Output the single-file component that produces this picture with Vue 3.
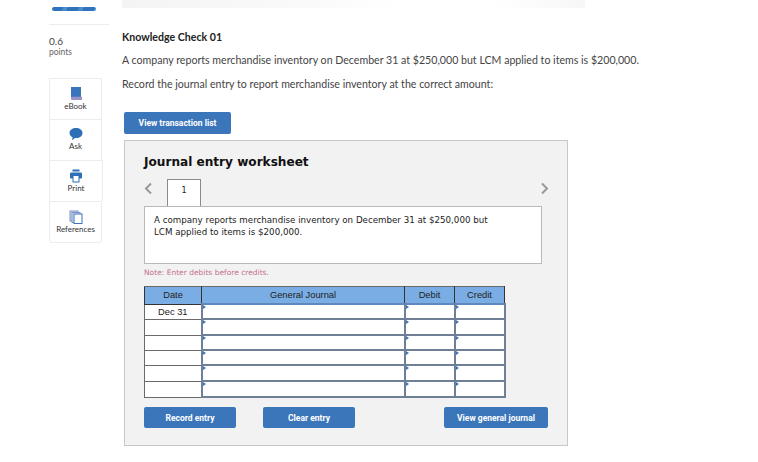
<script setup>
const rows = [
  { date: 'Dec 31' }, { date: '' }, { date: '' }, { date: '' }, { date: '' }, { date: '' }
]
</script>

<template>
  <div class="page">
    <aside class="side">
      <div class="progress"></div>
      <div class="rule"></div>
      <div class="score">0.6</div>
      <div class="pts">points</div>
      <div class="tools">
        <div class="tool">
          <svg width="14" height="14" viewBox="0 0 14 14"><path d="M2 0h10v10H3C2.400 10 2 10.400 2 11z" fill="#3a75bb"/><path d="M2 11c0-.8.5-1.200 1.200-1.200H13V13H3c-.6 0-1-.6-1-2z" fill="#9a92c8"/></svg>
          <span>eBook</span>
        </div>
        <div class="tool ask">
          <svg width="14" height="14" viewBox="0 0 14 14"><path d="M7 1c3.500 0 6.500 2 6.500 5S10.500 11 7.500 11c-.6 0-1 0-1.500-.1L3 13.200l.6-3C1.700 9.300.5 7.900.5 6 .5 3 3.500 1 7 1z" fill="#2f6fb5"/></svg>
          <span>Ask</span>
        </div>
        <div class="tool print">
          <svg width="14" height="14" viewBox="0 0 14 14"><rect x="3.500" y="0.500" width="7" height="2" fill="#2f6fb5"/><rect x="1" y="3.500" width="12" height="6" rx="1" fill="#2f6fb5"/><rect x="4" y="6.500" width="6" height="6.500" fill="#fff" stroke="#2f6fb5"/></svg>
          <span>Print</span>
        </div>
        <div class="tool last">
          <svg width="14" height="14" viewBox="0 0 14 14"><rect x="1" y="1" width="8" height="10" fill="#cfd8ee" stroke="#7d93c7"/><rect x="3" y="2.500" width="8" height="10" fill="#dfe6f5" stroke="#7d93c7"/><rect x="5" y="4" width="8" height="9.500" fill="#fff" stroke="#3a75bb"/></svg>
          <span>References</span>
        </div>
      </div>
    </aside>

    <main class="main">
      <div class="band"></div>
      <h1 class="heading">Knowledge Check 01</h1>
      <p class="para first">A company reports merchandise inventory on December 31 at $250,000 but LCM applied to items is $200,000.</p>
      <p class="para">Record the journal entry to report merchandise inventory at the correct amount:</p>
      <button class="btn list-btn">View transaction list</button>

      <section class="panel">
        <h2 class="title">Journal entry worksheet</h2>
        <div class="tabs">
          <svg class="chev" width="9" height="13" viewBox="0 0 9 13"><path d="M7 1.500 2 6.500l5 5" fill="none" stroke="#999" stroke-width="2"/></svg>
          <div class="tab">1</div>
          <svg class="chev right" width="9" height="13" viewBox="0 0 9 13"><path d="M2 1.500l5 5-5 5" fill="none" stroke="#999" stroke-width="2"/></svg>
        </div>
        <div class="desc">A company reports merchandise inventory on December 31 at $250,000 but<br>LCM applied to items is $200,000.</div>
        <div class="note">Note: Enter debits before credits.</div>

        <table class="grid">
          <colgroup>
            <col class="c-date"><col class="c-gj"><col class="c-dr"><col class="c-cr">
          </colgroup>
          <thead>
            <tr><th>Date</th><th>General Journal</th><th>Debit</th><th>Credit</th></tr>
          </thead>
          <tbody>
            <tr v-for="(r, i) in rows" :key="i">
              <td class="date">{{ r.date }}</td>
              <td class="cell"></td>
              <td class="cell"></td>
              <td class="cell"></td>
            </tr>
          </tbody>
        </table>

        <div class="actions">
          <button class="btn act">Record entry</button>
          <button class="btn act clear">Clear entry</button>
          <button class="btn act view">View general journal</button>
        </div>
      </section>
    </main>
  </div>
</template>

<style>
html, body { margin: 0; background: #fff; }
</style>

<style scoped>
.page {
  width: 758px;
  height: 462px;
  overflow: hidden;
  display: flex;
  gap: 13px;
  padding-left: 49px;
  box-sizing: border-box;
  font-family: Lato, "Open Sans", sans-serif;
  color: #333;
}
.side { width: 60px; flex: none; }
.progress {
  width: 44px;
  height: 4px;
  margin: 7px 0 0 3px;
  border-radius: 2px;
  background: repeating-linear-gradient(120deg, #2f74bb 0 10px, #4a8ccc 10px 14px);
}
.rule { height: 1px; background: #ececec; margin-top: 13px; }
.score { margin-top: 10px; font-size: 10px; line-height: 12px; color: #444; }
.pts { font-size: 8.500px; line-height: 11px; color: #666; }
.tools { margin-top: 20px; width: 53px; }
.tool {
  height: 41px;
  box-sizing: border-box;
  border: 1px solid #ececec;
  border-bottom: 0;
  display: flex;
  flex-direction: column;
  align-items: center;
  padding-top: 8px;
  font-size: 8px;
  line-height: 9px;
  color: #333;
}
.tool span { margin-top: 1px; }
.tool.ask { padding-top: 7px; }
.tool.print { width: 54px; }
.tool.last { border-bottom: 1px solid #ececec; border-radius: 0 0 3px 3px; height: 42px; }

.main { width: 636px; flex: none; }
.band {
  width: 463px;
  height: 8px;
  background: linear-gradient(90deg, #f4f4f4, #fafafa 40%, #fff 60%, #fff 80%, #f7f7f7);
}
.heading { margin: 23px 0 0; font-size: 10.600px; line-height: 13px; font-weight: 700; color: #222; }
.para { margin: 11px 0 0; font-size: 10.620px; line-height: 13px; color: #444; }
.para.first { margin-top: 10px; }
.btn {
  display: block;
  border: 0;
  padding: 0;
  border-radius: 2px;
  background: #3b76bb;
  color: #fff;
  font-family: Roboto, sans-serif;
  font-size: 8.500px;
  font-weight: 700;
}
.list-btn { width: 107px; height: 22px; margin: 21px 0 6px 2px; }

.panel {
  margin-left: 2px;
  width: 444px;
  height: 306px;
  box-sizing: border-box;
  background: #f2f2f2;
  border: 1px solid #c8c8c8;
  padding: 0 19px;
}
.title {
  margin: 13px 0 0;
  font-family: "DejaVu Sans", sans-serif;
  font-size: 12.100px;
  line-height: 17px;
  font-weight: 700;
  color: #111;
}
.tabs { display: flex; align-items: center; height: 27px; margin-top: 8px; position: relative; }
.chev { flex: none; margin: 0 0 8px 0; }
.chev.right { margin-left: auto; margin-right: -1px; }
.tab {
  width: 34px;
  height: 27px;
  box-sizing: border-box;
  margin-left: 14px;
  border: 1px solid #8a8a8a;
  border-bottom: 0;
  background: #fff;
  text-align: center;
  font-family: "DejaVu Sans", sans-serif;
  font-size: 8px;
  line-height: 22px;
  color: #222;
}
.desc {
  width: 398px;
  height: 58px;
  box-sizing: border-box;
  background: #fff;
  border: 1px solid #b9b9b9;
  padding: 7px 9px;
  font-family: "DejaVu Sans", sans-serif;
  font-size: 8.700px;
  line-height: 12px;
  color: #222;
}
.note {
  margin-top: 3px;
  font-family: "DejaVu Sans", sans-serif;
  font-size: 7.500px;
  line-height: 12px;
  color: #c4708a;
}
.grid {
  margin-top: 7px;
  width: 360px;
  table-layout: fixed;
  border-collapse: collapse;
  border: 1px solid #6a6a6a;
  font-family: "Liberation Sans", sans-serif;
  font-size: 9.300px;
  color: #222;
}
.c-date { width: 57px; }
.c-gj { width: 203px; }
.c-dr { width: 50px; }
.c-cr { width: 50px; }
th {
  height: 16px;
  padding: 0;
  font-weight: 400;
  background: #7aade4;
  border: 1px solid #333;
  border-top-color: #6a6a6a;
}
td { padding: 0; height: 13px; border: 1px solid #6a6a6a; }
tr:nth-child(2) td, tr:nth-child(5) td, tr:nth-child(6) td { height: 14px; }
td.date { background: #fff; text-align: center; }
td.cell {
  background: #fff;
  border: 2px solid #6f7f98;
  border-top: 2px solid #5f88bd;
  position: relative;
}
td.cell::before {
  content: "";
  position: absolute;
  left: 0;
  top: 0;
  border-left: 3px solid #3b76bb;
  border-top: 2px solid transparent;
  border-bottom: 2px solid transparent;
}
.actions { display: flex; margin-top: 9px; width: 404px; }
.act { width: 92px; height: 21px; }
.clear { margin-left: 27px; }
.view { width: 104px; margin-left: auto; }
</style>
